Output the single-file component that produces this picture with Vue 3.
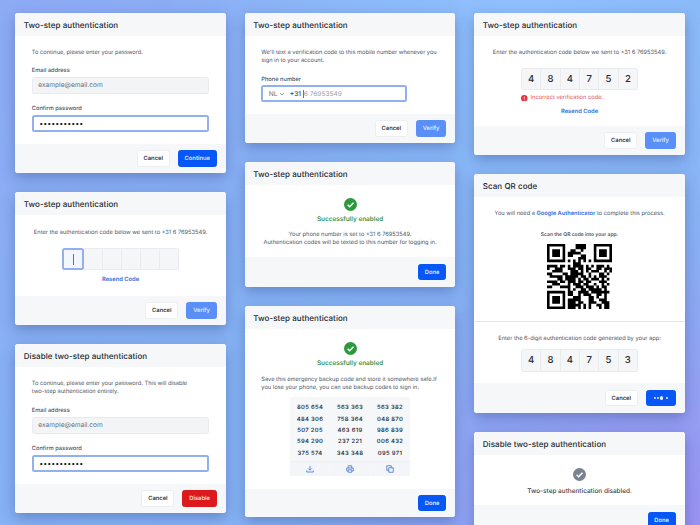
<template>
  <div class="board">
    <div class="col">
      <section class="card">
        <header class="head">Two-step authentication</header>
        <div class="body c1">
          <p class="txt">To continue, please enter your password.</p>
          <div class="field"><label>Email address</label><div class="input off">example@email.com</div></div>
          <div class="field second"><label>Confirm password</label><div class="input on dots">•••••••••••</div></div>
        </div>
        <footer class="foot"><button class="btn">Cancel</button><button class="btn primary">Continue</button></footer>
      </section>

      <section class="card">
        <header class="head">Two-step authentication</header>
        <div class="body c2">
          <p class="txt center">Enter the authentication code below we sent to +31 6 76953549.</p>
          <div class="code">
            <span class="cell active"><i class="caret"></i></span>
            <span v-for="n in 5" :key="n" class="cell"></span>
          </div>
          <a class="link">Resend Code</a>
        </div>
        <footer class="foot"><button class="btn">Cancel</button><button class="btn soft">Verify</button></footer>
      </section>

      <section class="card">
        <header class="head">Disable two-step authentication</header>
        <div class="body c3">
          <p class="txt tight">To continue, please enter your password. This will disable<br />two-step authentication entirely.</p>
          <div class="field wide"><label>Email address</label><div class="input off">example@email.com</div></div>
          <div class="field second"><label>Confirm password</label><div class="input on dots">•••••••••••</div></div>
        </div>
        <footer class="foot"><button class="btn">Cancel</button><button class="btn danger">Disable</button></footer>
      </section>
    </div>

    <div class="col">
      <section class="card">
        <header class="head">Two-step authentication</header>
        <div class="body c4">
          <p class="txt">We'll text a verification code to this mobile number whenever you<br />sign in to your account.</p>
          <div class="field phone">
            <label>Phone number</label>
            <div class="input on tel">
              <span class="nl">NL
                <svg width="6" height="6" viewBox="0 0 6 6"><path d="M1 2l2 2 2-2" fill="none" stroke="#6b7280" stroke-width=".7" /></svg>
              </span>
              <span class="prefix">+31</span><i class="caret thin"></i><span class="ph">6 76953549</span>
            </div>
          </div>
        </div>
        <footer class="foot"><button class="btn">Cancel</button><button class="btn soft">Verify</button></footer>
      </section>

      <section class="card">
        <header class="head">Two-step authentication</header>
        <div class="body c5">
          <svg class="tick" viewBox="0 0 13 13"><circle cx="6.5" cy="6.5" r="6.5" fill="#2a9a3c" /><path d="M3.6 6.7l2 2 3.9-4" fill="none" stroke="#fff" stroke-width="1.5" /></svg>
          <p class="ok">Successfully enabled</p>
          <p class="txt center lines">Your phone number is set to +31 6 76953549.<br />Authentication codes will be texted to this number for logging in.</p>
        </div>
        <footer class="foot tall"><button class="btn primary">Done</button></footer>
      </section>

      <section class="card">
        <header class="head">Two-step authentication</header>
        <div class="body c6">
          <svg class="tick" viewBox="0 0 13 13"><circle cx="6.5" cy="6.5" r="6.5" fill="#2a9a3c" /><path d="M3.6 6.7l2 2 3.9-4" fill="none" stroke="#fff" stroke-width="1.5" /></svg>
          <p class="ok">Successfully enabled</p>
          <p class="txt tight save">Save this emergency backup code and store it somewhere safe.If<br />you lose your phone, you can use backup codes to sign in.</p>
          <div class="backup">
            <div class="nums"><span v-for="c in backup" :key="c">{{ c }}</span></div>
            <div class="tools">
              <span>
                <svg width="8" height="8" viewBox="0 0 16 16" fill="none" stroke="#3f73d6" stroke-width="1.6"><path d="M8 1.5v8.5M4.5 7L8 10.5 11.5 7M1.5 11v3h13v-3" /></svg>
              </span>
              <span>
                <svg width="8" height="8" viewBox="0 0 16 16" fill="none" stroke="#3f73d6" stroke-width="1.6"><path d="M4.5 6V1.5h7V6M4 12H1.5V6h13v6H12M4.5 9.5h7v5h-7z" /></svg>
              </span>
              <span>
                <svg width="8" height="8" viewBox="0 0 16 16" fill="none" stroke="#3f73d6" stroke-width="1.6"><path d="M5.5 5.5h9v9h-9zM10.5 5.5v-4h-9v9h4" /></svg>
              </span>
            </div>
          </div>
        </div>
        <footer class="foot short"><button class="btn primary">Done</button></footer>
      </section>
    </div>

    <div class="col">
      <section class="card">
        <header class="head">Two-step authentication</header>
        <div class="body c7">
          <p class="txt center">Enter the authentication code below we sent to +31 6 76953549.</p>
          <div class="code">
            <span v-for="(d, i) in wrong" :key="i" class="cell">{{ d }}</span>
          </div>
          <div class="error">
            <svg width="6.5" height="6.5" viewBox="0 0 13 13"><circle cx="6.5" cy="6.5" r="6.5" fill="#e5343f" /><path d="M6.5 3v4.2M6.5 8.6v1.5" stroke="#fff" stroke-width="1.6" /></svg>
            Incorrect verification code.
          </div>
          <a class="link">Resend Code</a>
        </div>
        <footer class="foot"><button class="btn">Cancel</button><button class="btn soft">Verify</button></footer>
      </section>

      <section class="card">
        <header class="head">Scan QR code</header>
        <div class="body c8">
          <p class="txt center">You will need a <a class="inline">Google Authenticator</a> to complete this process.</p>
          <p class="scan">Scan the QR code into your app.</p>
          <svg class="qr" viewBox="0 0 25 25"><path :d="qrPath" fill="#000" /></svg>
        </div>
        <div class="body c9">
          <p class="txt center">Enter the 6-digit authentication code generated by your app:</p>
          <div class="code">
            <span v-for="(d, i) in right" :key="i" class="cell">{{ d }}</span>
          </div>
        </div>
        <footer class="foot tall">
          <button class="btn">Cancel</button>
          <button class="btn primary busy"><i></i><i></i><i class="big"></i><i class="last"></i></button>
        </footer>
      </section>

      <section class="card">
        <header class="head">Disable two-step authentication</header>
        <div class="body c10">
          <svg class="tick" viewBox="0 0 13 13"><circle cx="6.5" cy="6.5" r="6.5" fill="#7b8290" /><path d="M3.6 6.7l2 2 3.9-4" fill="none" stroke="#fff" stroke-width="1.5" /></svg>
          <p class="off-msg">Two-step authentication disabled.</p>
        </div>
        <footer class="foot tall"><button class="btn primary">Done</button></footer>
      </section>
    </div>
  </div>
</template>

<script setup>
const wrong = [4, 8, 4, 7, 5, 2]
const right = [4, 8, 4, 7, 5, 3]

const backup = [
  '805 654', '563 363', '563 382',
  '484 306', '758 364', '048 870',
  '507 205', '463 619', '986 839',
  '594 290', '237 221', '006 432',
  '375 574', '343 348', '095 971',
]

const qrRows = [
  '1111111000011110001111111',
  '1000001000011110001000001',
  '1011101001100100001011101',
  '1011101011111000001011101',
  '1011101011000110001011101',
  '1000001000001110001000001',
  '1111111010101010101111111',
  '0000000000111000000000000',
  '1111011010111101010111010',
  '1001110011101101100110111',
  '0011110001110101011100101',
  '1100001101111100100011010',
  '0111110111110110101011100',
  '0000110111101011011101010',
  '1111011011101101100011100',
  '0011100010111011001001010',
  '1100011110011101110101100',
  '0000000010100110111110100',
  '1111111011001111011111110',
  '1000001011001011100110100',
  '1011101000111000110100100',
  '1011101011111000110011100',
  '1011101011101100111001110',
  '1000001011111010100110110',
  '1111111011101010100010110',
]

// rows are filled cell by cell so the code can be edited as text
const qrPath = qrRows
  .map((row, y) => row.split('').map((c, x) => (c === '1' ? `M${x} ${y}h1v1h-1z` : '')).join(''))
  .join('')
</script>

<style>
body { margin: 0; }
</style>

<style scoped>
.board {
  width: 700px; height: 525px; overflow: hidden; box-sizing: border-box;
  display: flex; gap: 19px; padding: 13px 15px 0 15.3px;
  font-family: Inter, "Liberation Sans", sans-serif; color: #374151;
  text-rendering: geometricPrecision;
  background:
    radial-gradient(420px 300px at 100% 100%, #9a92f2 0%, rgba(154,146,242,0) 100%),
    radial-gradient(360px 260px at 75% 0%, #8fc0fd 0%, rgba(143,192,253,0) 100%),
    linear-gradient(135deg, #8eaaf4 0%, #85b3f4 50%, #8cb0f4 100%);
}
.col { width: 210.5px; flex: none; display: flex; flex-direction: column; gap: 19px; }
.card {
  flex: none; background: #fff; border-radius: 3px; overflow: hidden;
  box-shadow: 0 5px 14px rgba(45, 65, 135, .38);
}
.head {
  height: 23px; line-height: 24px; padding: 0 8.5px; background: #f6f7f9;
  font-size: 8px; font-weight: 500; color: #23272f; letter-spacing: .05px;
}
.body { padding-left: 16.5px; padding-right: 16.5px; }
p { margin: 0; }
.txt { font-size: 5.7px; line-height: 8px; color: #4b5563; white-space: nowrap; }
.center { text-align: center; }
.tight { line-height: 7.5px; }
.foot {
  height: 29px; box-sizing: border-box; padding: 0 9px; background: #f6f7f9;
  display: flex; justify-content: flex-end; align-items: center; gap: 8px;
}
.foot.tall { height: 30px; }
.foot.short { height: 28px; }
.btn {
  height: 16.5px; padding: 0 5.8px; border: 1px solid #eceef1; border-radius: 2.5px; background: #fff;
  font: 600 5.8px Inter, "Liberation Sans", sans-serif; color: #2f3744;
  text-rendering: geometricPrecision;
}
.primary { background: #0757f7; border-color: #0757f7; color: #dfe9ff; }
.soft { background: #5a8ff8; border-color: #5a8ff8; color: #dbe6fd; }
.danger { background: #dc1a1e; border-color: #dc1a1e; color: #fbdcdc; }

.field label { display: block; font-size: 5.7px; line-height: 8px; font-weight: 500; color: #4b5563; }
.input {
  height: 16.5px; box-sizing: border-box; margin-top: 2px; padding: 0 5.5px; border-radius: 2.5px;
  display: flex; align-items: center; font-size: 6.6px;
}
.off { background: #f3f4f6; border: 1px solid #e8eaed; color: #6b7280; }
.on { border: 2px solid #92aff0; background: #fff; }
.dots { font-size: 7px; color: #111827; letter-spacing: .05px; }
.c1 { padding-top: 13px; padding-bottom: 12.5px; }
.c1 .field { margin-top: 10px; }
.c1 .field.second { margin-top: 11.5px; }
.c3 { padding-top: 13px; padding-bottom: 12.5px; }
.c3 .field.wide { margin-top: 12px; }
.c3 .field.second { margin-top: 11.5px; }

.code { width: 117px; height: 22px; margin: 11px auto 0; display: flex; }
.cell {
  flex: 1; background: #f5f6f8; border: 1px solid #e9ebee; border-left-width: 0; box-sizing: border-box;
  display: flex; align-items: center; justify-content: center;
  font-size: 9.5px; font-weight: 500; color: #1f2937;
}
.cell:first-child { border-left-width: 1px; border-radius: 2.5px 0 0 2.5px; }
.cell:last-child { border-radius: 0 2.5px 2.5px 0; }
.cell.active { border: 2px solid #92aff0; border-radius: 2.5px; background: #f3f6fc; }
.caret { display: block; width: 1px; height: 11px; background: #6b7280; }
.caret.thin { height: 8px; width: .6px; margin: 0 .6px 0 1.5px; }
.link {
  display: block; margin-top: 6px; text-align: center; font-size: 5.8px; line-height: 8px;
  font-weight: 600; color: #2f6ee0;
}
.c2 { padding-top: 14px; padding-bottom: 12px; }

.c4 { padding-top: 13px; padding-bottom: 12px; }
.phone { margin-top: 11px; width: 146px; }
.tel { height: 17px; margin-top: 1px; }
.nl { display: flex; align-items: center; gap: 1px; width: 21px; color: #6b7280; }
.prefix { color: #374151; font-weight: 500; }
.ph { color: #9ca3af; }

.tick { display: block; width: 13px; height: 13px; margin: 0 auto; }
.ok { margin-top: 4.5px; text-align: center; font-size: 6.4px; line-height: 8px; font-weight: 600; color: #3b9650; }
.c5 { padding-top: 12.5px; padding-bottom: 10px; }
.lines { margin-top: 8px; }
.c6 { padding-top: 12.5px; padding-bottom: 14px; }
.save { margin-top: 9px; }
.backup { width: 120px; height: 78px; margin: 6px auto 0; background: #f6f7f9; border-radius: 3px; box-sizing: border-box; padding-top: 5.4px; }
.nums { display: grid; grid-template-columns: repeat(3, 1fr); text-align: center; font-size: 5.8px; line-height: 11.3px; font-weight: 600; color: #2f3744; letter-spacing: .35px; }
.tools { display: grid; grid-template-columns: repeat(3, 1fr); gap: 1px; height: 14px; margin-top: 2px; border-top: 1px solid #eef0f3; }
.tools span { display: flex; align-items: center; justify-content: center; background: #f3f5f8; }

.c7 { padding-top: 13px; padding-bottom: 10px; }
.error { width: 117px; margin: 4px auto 0; display: flex; align-items: center; gap: 3px; font-size: 5.7px; line-height: 8px; color: #e0505a; white-space: nowrap; }
.c7 .link { margin-top: 6px; }

.c8 { padding-top: 13px; padding-bottom: 12px; border-bottom: 1px solid #e5e7eb; }
.inline { color: #2f6ee0; font-weight: 600; }
.scan { margin-top: 13.5px; text-align: center; font-size: 5px; line-height: 7px; font-weight: 600; color: #4b5563; }
.qr { display: block; width: 65px; height: 65px; margin: 5.5px auto 0; }
.c9 { padding-top: 13px; padding-bottom: 11px; }
.c9 .code { margin-top: 6px; height: 23px; }
.busy { width: 30px; padding: 0; display: flex; align-items: center; justify-content: center; gap: 1px; }
.busy i { display: block; width: 2px; height: 2px; border-radius: 50%; background: #e6eeff; }
.busy i.big { width: 3.4px; height: 3.4px; }
.busy i.last { margin-left: 2px; }

.c10 { padding-top: 12.5px; padding-bottom: 10px; }
.off-msg { margin-top: 6.5px; text-align: center; font-size: 6.45px; line-height: 8px; font-weight: 500; color: #374151; }
</style>
